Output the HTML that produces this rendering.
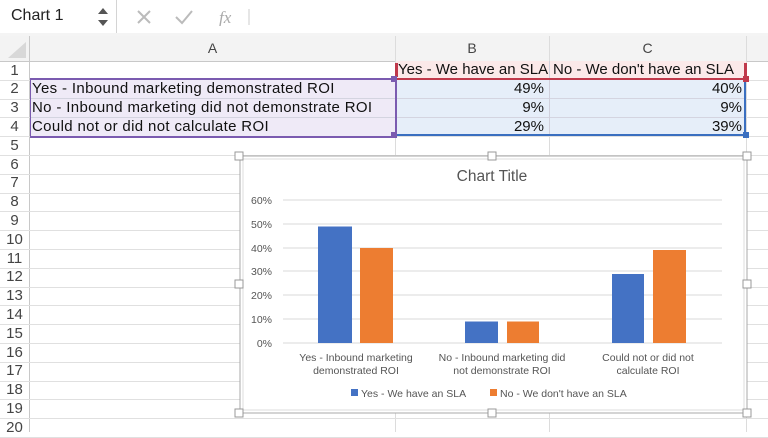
<!DOCTYPE html>
<html><head><style>
body{margin:0;width:768px;height:432px;overflow:hidden;background:#fff;font-family:"Liberation Sans",sans-serif;position:relative}
.a{position:absolute}
</style></head><body>
<div class="a" style="left:0;top:0;width:768px;height:33px;background:#fff;border-bottom:1px solid #d0d0d0"></div>
<div class="a" style="left:0;top:0;width:116px;height:33px;border-right:1px solid #d4d4d4"></div>
<div class="a" style="left:11px;top:7px;font-size:16px;color:#222">Chart 1</div>
<svg class="a" style="left:96px;top:5px" width="14" height="24"><path d="M2 9 L7 3 L12 9Z M2 15 L7 21 L12 15Z" fill="#555"/></svg>
<svg class="a" style="left:136px;top:8px" width="120" height="18">
<path d="M2 3 L14 15 M14 3 L2 15" stroke="#bbb" stroke-width="2"/>
<path d="M40 9 L46 15 L56 3" stroke="#bbb" stroke-width="2" fill="none"/>
<text x="83" y="15" font-family="Liberation Serif" font-style="italic" font-size="17" fill="#aaa">fx</text>
<line x1="113" y1="1" x2="113" y2="17" stroke="#ccc"/>
</svg>
<div class="a" style="left:0;top:33px;width:768px;height:3px;background:#f4f4f4"></div>
<div class="a" style="left:0;top:36px;width:768px;height:25px;background:#f3f3f3;border-bottom:1px solid #c8c8c8"></div>
<svg class="a" style="left:4px;top:40px" width="24" height="20"><path d="M22 2 L22 18 L4 18Z" fill="#d8d8d8"/></svg>
<div class="a" style="left:29px;top:36px;width:1px;height:396px;background:#c8c8c8"></div>
<div class="a" style="left:30px;top:40px;width:365px;text-align:center;font-size:14px;color:#444">A</div>
<div class="a" style="left:395px;top:40px;width:154px;text-align:center;font-size:14px;color:#444">B</div>
<div class="a" style="left:549px;top:40px;width:197px;text-align:center;font-size:14px;color:#444">C</div>
<div class="a" style="left:395px;top:36px;width:1px;height:396px;background:#dcdcdc"></div>
<div class="a" style="left:549px;top:36px;width:1px;height:396px;background:#dcdcdc"></div>
<div class="a" style="left:746px;top:36px;width:1px;height:396px;background:#dcdcdc"></div>
<div id="rows"></div>
<script>
var h='';for(var i=1;i<=20;i++){var t=61+(i-1)*18.8;h+='<div class="a" style="left:0;top:'+(t+18.8)+'px;width:768px;height:1px;background:#e0e0e0"></div><div class="a" style="left:0;top:'+(t+0.5)+'px;width:29px;text-align:center;font-size:15px;color:#444">'+i+'</div>';}
document.getElementById('rows').innerHTML=h;
</script>
<div class="a" style="left:30px;top:80px;width:365px;height:56px;background:#efeaf7"></div>
<div class="a" style="left:396px;top:61px;width:350px;height:19px;background:#fbe9e9"></div>
<div class="a" style="left:396px;top:80px;width:350px;height:56px;background:#e6eef9"></div>
<div class="a" style="left:30px;top:98px;width:716px;height:1px;background:#d4d4e0"></div>
<div class="a" style="left:30px;top:117px;width:716px;height:1px;background:#d4d4e0"></div>
<div class="a" style="left:549px;top:61px;width:1px;height:75px;background:#d0d0dc"></div>
<div class="a" style="left:30px;top:78px;width:364px;height:56px;border:2px solid #7b5bb0;border-left-width:1px"></div>
<div class="a" style="left:396px;top:78px;width:350px;height:2px;background:#c0394b"></div>
<div class="a" style="left:395px;top:63px;width:3px;height:14px;background:#c0394b"></div>
<div class="a" style="left:744px;top:63px;width:3px;height:14px;background:#c0394b"></div>
<div class="a" style="left:396px;top:134px;width:350px;height:2px;background:#3a6fc0"></div>
<div class="a" style="left:744px;top:82px;width:2px;height:52px;background:#3a6fc0"></div>
<div class="a" style="left:391px;top:76px;width:6px;height:6px;background:#7b5bb0"></div>
<div class="a" style="left:391px;top:132px;width:6px;height:6px;background:#7b5bb0"></div>
<div class="a" style="left:743px;top:76px;width:6px;height:6px;background:#c0394b"></div>
<div class="a" style="left:743px;top:132px;width:6px;height:6px;background:#3a6fc0"></div>
<div class="a" style="left:32px;top:80px;font-size:15px;line-height:18.8px;color:#111;white-space:nowrap;letter-spacing:0.35px">Yes - Inbound marketing demonstrated ROI<br>No - Inbound marketing did not demonstrate ROI<br>Could not or did not calculate ROI</div>
<div class="a" style="left:398px;top:61px;font-size:15px;color:#111;white-space:nowrap">Yes - We have an SLA</div>
<div class="a" style="left:553px;top:61px;font-size:15px;color:#111;white-space:nowrap">No - We don't have an SLA</div>
<div class="a" style="left:396px;top:80px;width:148px;text-align:right;font-size:15px;line-height:18.8px;color:#111">49%<br>9%<br>29%</div>
<div class="a" style="left:550px;top:80px;width:192px;text-align:right;font-size:15px;line-height:18.8px;color:#111">40%<br>9%<br>39%</div>
<svg class="a" style="left:0;top:0" width="768" height="432" font-family="Liberation Sans">
<rect x="240" y="156" width="507" height="257" fill="#fff" stroke="#a8a8a8"/>
<rect x="243" y="159" width="501" height="251" fill="none" stroke="#ddd"/>
<g fill="#fff" stroke="#999">
<rect x="235" y="152" width="8" height="8"/><rect x="488" y="152" width="8" height="8"/><rect x="743" y="152" width="8" height="8"/>
<rect x="235" y="280" width="8" height="8"/><rect x="743" y="280" width="8" height="8"/>
<rect x="235" y="409" width="8" height="8"/><rect x="488" y="409" width="8" height="8"/><rect x="743" y="409" width="8" height="8"/>
</g>
<text x="492" y="181" text-anchor="middle" font-size="15.5" fill="#555">Chart Title</text>
<g stroke="#d9d9d9">
<line x1="283" y1="200" x2="722" y2="200"/><line x1="283" y1="224" x2="722" y2="224"/><line x1="283" y1="248" x2="722" y2="248"/>
<line x1="283" y1="271" x2="722" y2="271"/><line x1="283" y1="295" x2="722" y2="295"/><line x1="283" y1="319" x2="722" y2="319"/><line x1="283" y1="343" x2="722" y2="343"/>
</g>
<g font-size="10.5" fill="#555" text-anchor="end">
<text x="272" y="204">60%</text><text x="272" y="228">50%</text><text x="272" y="252">40%</text><text x="272" y="275">30%</text><text x="272" y="299">20%</text><text x="272" y="323">10%</text><text x="272" y="347">0%</text>
</g>
<g fill="#4472c4"><rect x="318" y="226.5" width="34" height="116.5"/><rect x="465" y="321.5" width="33" height="21.5"/><rect x="612" y="274" width="32" height="69"/></g>
<g fill="#ed7d31"><rect x="360" y="248" width="33" height="95"/><rect x="507" y="321.5" width="32" height="21.5"/><rect x="653" y="250" width="33" height="93"/></g>
<g font-size="10.5" fill="#555" text-anchor="middle">
<text x="356" y="361">Yes - Inbound marketing</text><text x="356" y="374">demonstrated ROI</text>
<text x="502" y="361">No - Inbound marketing did</text><text x="502" y="374">not demonstrate ROI</text>
<text x="648" y="361">Could not or did not</text><text x="648" y="374">calculate ROI</text>
</g>
<rect x="351" y="389" width="7" height="7" fill="#4472c4"/><text x="361" y="397" font-size="10.5" fill="#555">Yes - We have an SLA</text>
<rect x="490" y="389" width="7" height="7" fill="#ed7d31"/><text x="500" y="397" font-size="10.5" fill="#555">No - We don't have an SLA</text>
</svg>
</body></html>
